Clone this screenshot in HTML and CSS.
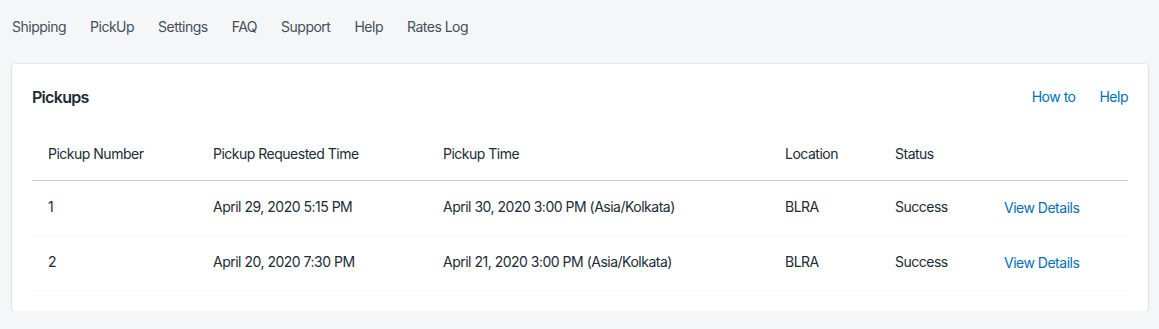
FILE: index.html
```html
<!DOCTYPE html>
<html lang="en">
<head>
<meta charset="utf-8">
<title>Pickups</title>
<link rel="stylesheet" href="styles.css">
</head>
<body>
<nav class="topnav">
  <a class="nav-item" href="#">Shipping</a>
  <a class="nav-item" href="#">PickUp</a>
  <a class="nav-item" href="#">Settings</a>
  <a class="nav-item" href="#">FAQ</a>
  <a class="nav-item" href="#">Support</a>
  <a class="nav-item" href="#">Help</a>
  <a class="nav-item" href="#">Rates Log</a>
</nav>
<main class="page">
  <section class="card">
    <header class="card-header">
      <h2 class="card-title">Pickups</h2>
      <div class="card-actions">
        <a class="link" href="#">How to</a>
        <a class="link" href="#">Help</a>
      </div>
    </header>
    <table class="table">
      <colgroup>
        <col class="c1"><col class="c2"><col class="c3"><col class="c4"><col class="c5"><col class="c6">
      </colgroup>
      <thead>
        <tr>
          <th>Pickup Number</th>
          <th>Pickup Requested Time</th>
          <th>Pickup Time</th>
          <th>Location</th>
          <th>Status</th>
          <th></th>
        </tr>
      </thead>
      <tbody>
        <tr>
          <td>1</td>
          <td>April 29, 2020 5:15 PM</td>
          <td>April 30, 2020 3:00 PM (Asia/Kolkata)</td>
          <td>BLRA</td>
          <td>Success</td>
          <td><a class="link" href="#">View Details</a></td>
        </tr>
        <tr>
          <td>2</td>
          <td>April 20, 2020 7:30 PM</td>
          <td>April 21, 2020 3:00 PM (Asia/Kolkata)</td>
          <td>BLRA</td>
          <td>Success</td>
          <td><a class="link" href="#">View Details</a></td>
        </tr>
      </tbody>
    </table>
  </section>
</main>
</body>
</html>
```
FILE: styles.css
```css
* { box-sizing: border-box; }
html, body { margin: 0; padding: 0; }
body {
  background: #f4f6f8;
  font-family: Inter, "Noto Sans", "Liberation Sans", sans-serif;
  font-size: 14px;
  line-height: 20px;
  letter-spacing: -0.5px;
  color: #212b36;
}
.topnav {
  display: flex;
  padding: 17px 0 0 0;
  height: 52px;
}
.nav-item {
  padding: 0 12px;
  color: #454f5b;
  text-decoration: none;
  font-size: 14px;
  line-height: 20px;
  height: 20px;
}
.page {
  padding: 12px 11px 0 12px;
}
.card {
  background: #fff;
  border-radius: 3px;
  box-shadow: 0 0 0 1px rgba(63,63,68,0.05), 0 1px 3px 0 rgba(63,63,68,0.15);
  padding: 21px 20px 20px 20px;
}
.card-header {
  display: flex;
  align-items: center;
  justify-content: space-between;
  height: 24px;
  margin-bottom: 17px;
}
.card-title {
  margin: 0;
  font-size: 16px;
  font-weight: 600;
  line-height: 24px;
  letter-spacing: -0.7px;
}
.card-actions {
  display: flex;
  gap: 24px;
}
.link {
  color: #006fbb;
  text-decoration: none;
}
.table {
  width: 100%;
  border-collapse: collapse;
  table-layout: fixed;
}
.c1 { width: 165px; }
.c2 { width: 230px; }
.c3 { width: 342px; }
.c4 { width: 110px; }
.c5 { width: 109px; }
.c6 { width: auto; }
.table th {
  font-weight: 400;
  text-align: left;
  padding: 18px 16px 16px 16px;
  border-bottom: 1px solid #c4cdd5;
  white-space: nowrap;
}
.table td {
  padding: 16px 16px 18px 16px;
  border-bottom: 1px solid #f4f6f8;
  white-space: nowrap;
}
.table td .link { position: relative; top: 1px; }
```
